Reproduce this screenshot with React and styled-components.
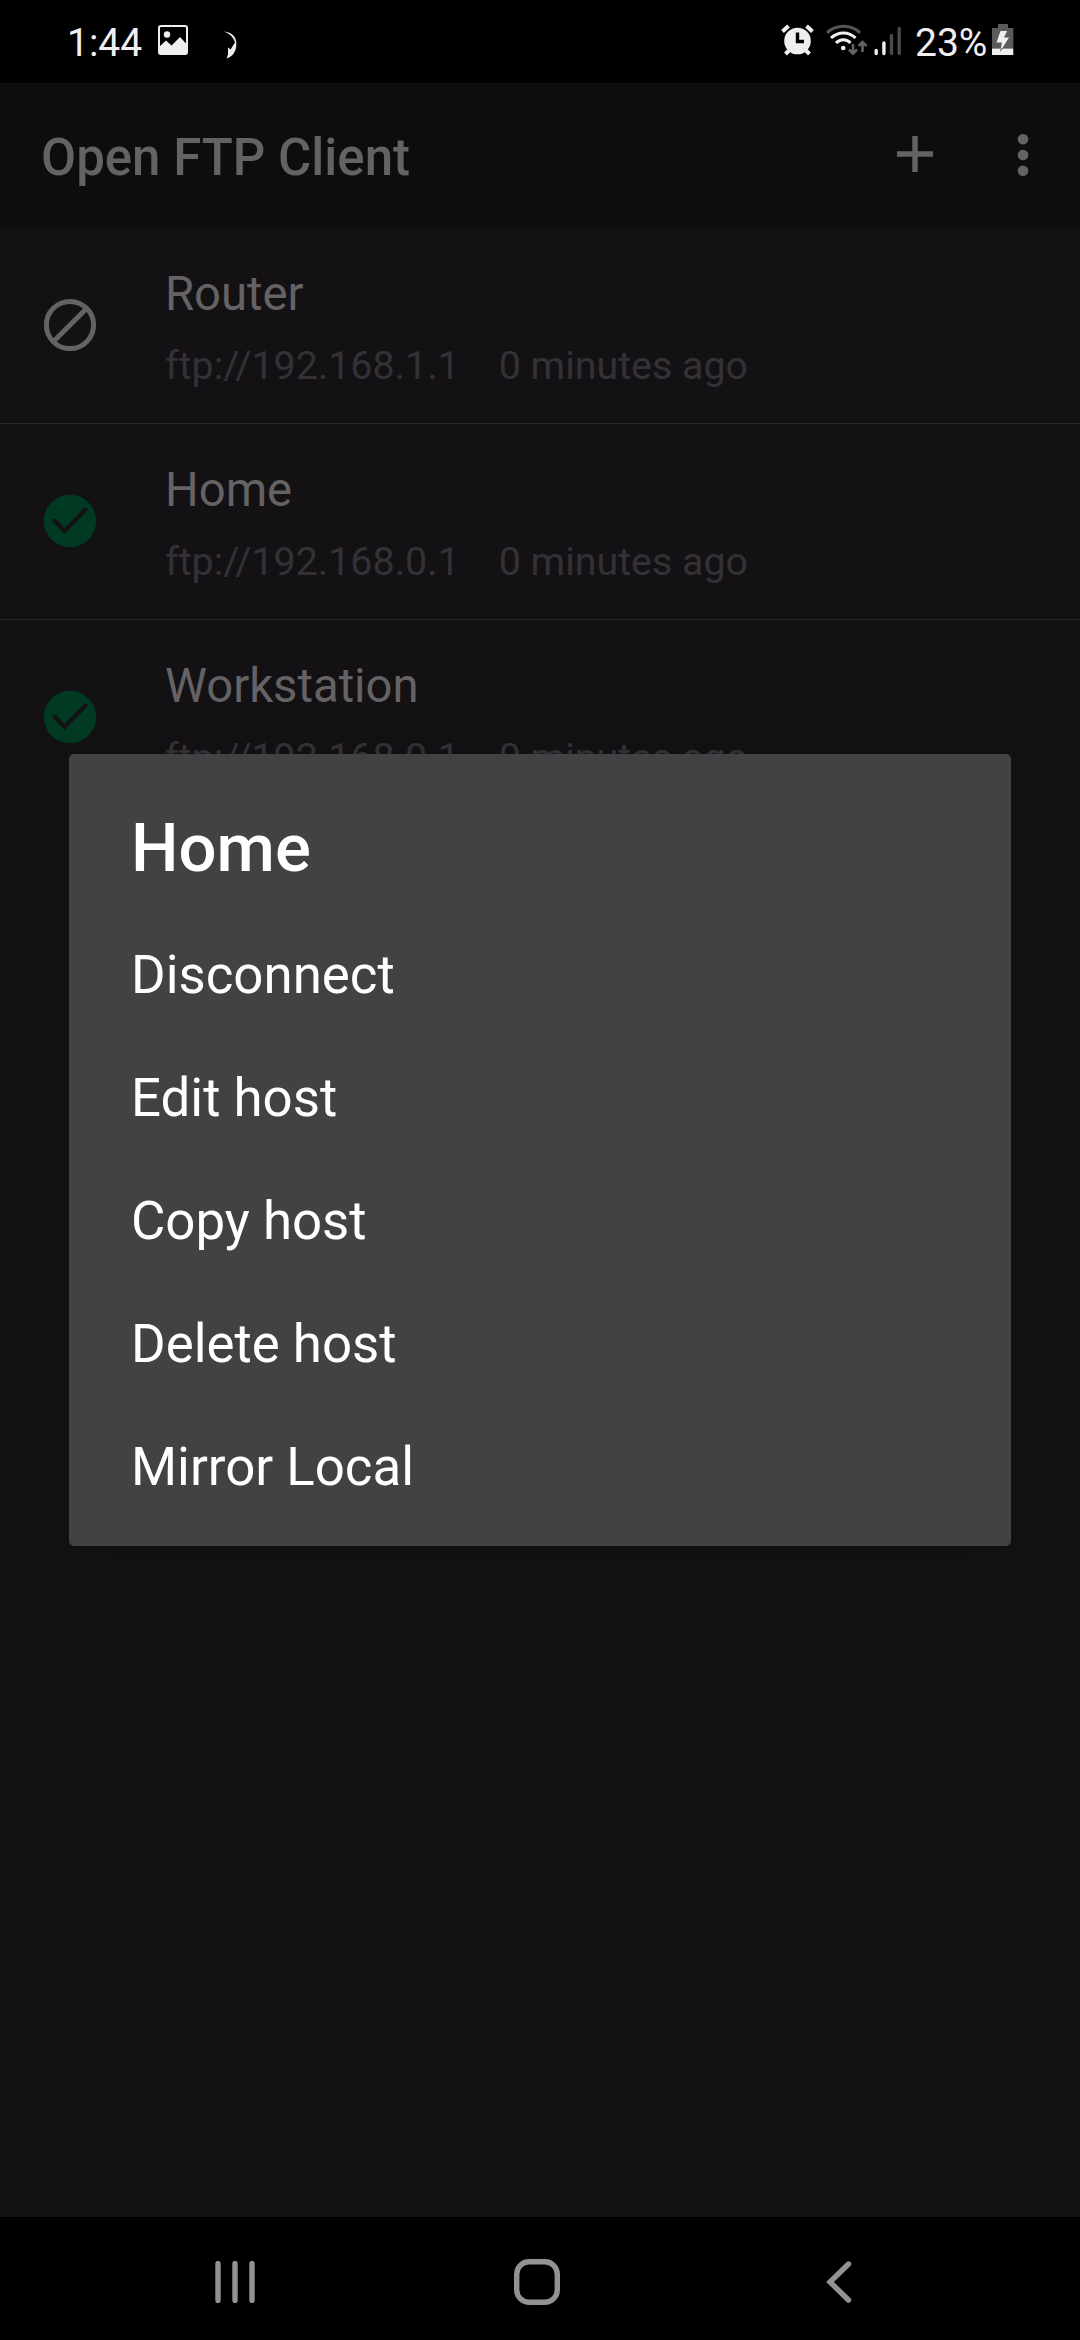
import styled, { createGlobalStyle } from "styled-components";

const hosts = [
    { name: "Router", url: "ftp://192.168.1.1", checked: "0 minutes ago", online: false },
    { name: "Home", url: "ftp://192.168.0.1", checked: "0 minutes ago", online: true },
    { name: "Workstation", url: "ftp://192.168.0.1", checked: "0 minutes ago", online: true },
];

const actions = ["Disconnect", "Edit host", "Copy host", "Delete host", "Mirror Local"];

const StatusBar = () => (
    <StatusDiv>
        <Clock>1:44</Clock>
        <PictureIcon />
        <MoonIcon />
        <StatusRight>
            <AlarmIcon />
            <WifiIcon />
            <SignalIcon />
            <Percent>23%</Percent>
            <BatteryIcon />
        </StatusRight>
    </StatusDiv>
);

const PictureIcon = () => (
    <svg width="30" height="30" viewBox="0 0 30 30">
        <rect x="1" y="1" width="28" height="28" rx="2" fill="none" stroke="#f0eef1" strokeWidth="2" />
        <circle cx="9" cy="9.5" r="3.2" fill="#f0eef1" />
        <path d="M1 22L8 15.5L13.5 20.5L22 12L29 19.5V29H1Z" fill="#f0eef1" />
    </svg>
);

const MoonIcon = () => (
    <Moon width="14" height="28" viewBox="0 0 14 28">
        <path d="M0 0.500C7 0.500 12.500 4.500 13.300 11V15C12.800 21 9 26 3.500 27.500L5 23.500V16.500L7.500 18.500L12 11.500C10 5.500 6 1.800 0 0.500Z" fill="#f0eef1" />
    </Moon>
);

const AlarmIcon = () => (
    <svg width="33" height="32" viewBox="0 0 33 32">
        <g fill="none" stroke="#f0eef1" strokeWidth="4">
            <path d="M1.500 7.500L7.500 2M25.500 2L31.500 7.500" />
            <path d="M4.500 30L9 25.500M24 25.500L28.500 30" />
        </g>
        <circle cx="16.500" cy="17" r="13.300" fill="#f0eef1" />
        <path d="M16.500 8.500V17.500H23" fill="none" stroke="#000" strokeWidth="3.400" />
    </svg>
);

const WifiIcon = () => (
    <Wifi width="42" height="32" viewBox="0 0 42 32">
        <g fill="none" strokeWidth="3">
            <path d="M1 8.800C10 .2 25 .2 34 8.800" stroke="#565457" />
            <path d="M5 14C12 7.200 23 7.200 29.500 14" stroke="#f0eef1" />
            <path d="M10 19C14.500 14.800 20.500 14.800 24.500 19" stroke="#f0eef1" />
        </g>
        <circle cx="17.200" cy="24" r="2.300" fill="#f0eef1" />
        <g fill="none" stroke="#666367" strokeWidth="2.600">
            <path d="M27 20V29.500M23 25.500L27 29.700L31 25.500" />
            <path d="M36.500 28V18.500M32.500 22L36.500 18L40.500 22" />
        </g>
    </Wifi>
);

const SignalIcon = () => (
    <Signal width="28" height="30" viewBox="0 0 28 30">
        <g strokeWidth="3.400" strokeLinecap="round">
            <path d="M2.200 24.500V27.500M9.900 17V27.500" stroke="#f0eef1" />
            <path d="M17.500 9.500V27.500M25.200 2.500V27.500" stroke="#4b494c" />
        </g>
    </Signal>
);

const BatteryIcon = () => (
    <Battery width="22" height="32" viewBox="0 0 22 32">
        <path d="M6 0H16V4H21.300V24.500H0V4H6Z" fill="#5c5a5d" />
        <path d="M0 24.500H21.300V31H0Z" fill="#f0eef1" />
        <path d="M8.500 7H15L12 13.500H17L8.200 27.500L10 18.500H4.500Z" fill="#f0eef1" />
        <path d="M9 24.500H10.500L8 28Z" fill="#222" />
    </Battery>
);

const OfflineIcon = () => (
    <svg width="54" height="54" viewBox="0 0 54 54" fill="none" stroke="#656266" strokeWidth="5">
        <circle cx="27" cy="27" r="23.600" />
        <path d="M10.500 43.500L43.500 10.500" />
    </svg>
);

const OnlineIcon = () => (
    <svg width="54" height="54" viewBox="0 0 54 54">
        <circle cx="27" cy="27" r="26.200" fill="#003a22" />
        <path d="M11.500 26.500L21.500 37L42.500 15.500" fill="none" stroke="#131114" strokeWidth="4" strokeLinecap="round" />
    </svg>
);

const App = () => {
    return (
        <Screen>
            <GlobalStyle />
            <StatusBar />
            <AppBar>
                <Title>Open FTP Client</Title>
                <svg width="36" height="36" viewBox="0 0 36 36">
                    <path d="M18 0V36M0 18H36" stroke="#656266" strokeWidth="5.400" />
                </svg>
                <MenuDots width="12" height="44" viewBox="0 0 12 44" fill="#656266">
                    <circle cx="6" cy="6.300" r="5.300" />
                    <circle cx="6" cy="22" r="5.300" />
                    <circle cx="6" cy="37.700" r="5.300" />
                </MenuDots>
            </AppBar>

            <HostList>
                {hosts.map((host) => (
                    <HostRow key={host.name}>
                        {host.online ? <OnlineIcon /> : <OfflineIcon />}
                        <HostText>
                            <HostName>{host.name}</HostName>
                            <HostInfo>
                                <span>{host.url}</span>
                                <span>{host.checked}</span>
                            </HostInfo>
                        </HostText>
                    </HostRow>
                ))}
            </HostList>

            <NavBar>
                <svg width="40" height="42" viewBox="0 0 40 42">
                    <path d="M3 2.500V39.500M20 2.500V39.500M37 2.500V39.500" stroke="#949195" strokeWidth="5.400" strokeLinecap="round" />
                </svg>
                <HomeButton width="46" height="46" viewBox="0 0 46 46">
                    <rect x="2.700" y="2.700" width="40.600" height="40.600" rx="12.500" fill="none" stroke="#949195" strokeWidth="5.400" />
                </HomeButton>
                <svg width="26" height="42" viewBox="0 0 26 42">
                    <path d="M22.500 3L4 21L22.500 39" fill="none" stroke="#949195" strokeWidth="5.400" strokeLinecap="round" />
                </svg>
            </NavBar>

            <Overlay>
                <Dialog role="dialog">
                    <DialogTitle>Home</DialogTitle>
                    {actions.map((action) => (
                        <Action key={action}>{action}</Action>
                    ))}
                </Dialog>
            </Overlay>
        </Screen>
    );
};

const GlobalStyle = createGlobalStyle`
    body {
        margin: 0;
        background-color: #131114;
        font-family: Roboto, sans-serif;
    }

    * {
        box-sizing: border-box;
    }

    svg {
        display: block;
        flex-shrink: 0;
    }
`

const Screen = styled.div`
    position: relative;
    display: flex;
    flex-direction: column;
    width: 1080px;
    height: 2340px;
    overflow: hidden;
    background-color: #131114;
`

const StatusDiv = styled.div`
    display: flex;
    align-items: center;
    height: 83px;
    padding: 0 66px 3px 67px;
    background-color: #000;
    color: #f0eef1;
`

const Clock = styled.span`
    width: 91px;
    padding-top: 5px;
    font-size: 39px;
    line-height: 46px;
`

const Moon = styled.svg`
    margin: 9px 0 0 35px;
`

const StatusRight = styled.div`
    display: flex;
    align-items: center;
    margin-left: auto;
`

const Wifi = styled.svg`
    margin-left: 12px;
`

const Signal = styled.svg`
    margin: 2px 0 0 6px;
`

const Percent = styled.span`
    width: 74px;
    margin-left: 13px;
    padding-top: 5px;
    font-size: 39px;
    line-height: 46px;
`

const Battery = styled.svg`
    margin-left: 3px;
`

const AppBar = styled.header`
    display: flex;
    align-items: center;
    height: 145px;
    padding: 0 51px 3px 41px;
    background-color: #0e0c0f;
`

const Title = styled.h1`
    flex: 1;
    margin: 0;
    padding-top: 7px;
    color: #656266;
    font-size: 51px;
    font-weight: 500;
    line-height: 62px;
`

const MenuDots = styled.svg`
    margin: 2px 0 0 84px;
`

const HostList = styled.main`
    flex: 1;
`

const HostRow = styled.div`
    display: flex;
    align-items: center;
    gap: 68px;
    height: 196px;
    padding: 0 0 2px 43px;
    border-bottom: 1px solid #272a2c;

    &:last-child {
        border-bottom-color: transparent;
    }
`

const HostText = styled.div`
    padding-top: 7px;
`

const HostName = styled.div`
    color: #656266;
    font-size: 47.250px;
    line-height: 60px;
`

const HostInfo = styled.div`
    display: flex;
    gap: 39px;
    margin-top: 15px;
    color: #333135;
    font-size: 39.400px;
    line-height: 54px;
`

const NavBar = styled.nav`
    display: flex;
    align-items: center;
    justify-content: space-between;
    height: 123px;
    padding: 7px 228px 0 215px;
    background-color: #000;
`

const HomeButton = styled.svg`
    margin-right: 8px;
`

// keeps the dialog centred between the status bar and the nav bar
const Overlay = styled.div`
    position: absolute;
    inset: 83px 0 123px;
    display: flex;
    align-items: center;
    justify-content: center;
`

const Dialog = styled.div`
    width: 942px;
    height: 792px;
    padding: 54px 62px 0;
    border-radius: 5px;
    background-color: #444144;
    box-shadow: 0 16px 50px rgba(0, 0, 0, 0.1);
    color: #fff;
`

const DialogTitle = styled.h2`
    margin: 0 0 25px;
    font-size: 67px;
    font-weight: 500;
    line-height: 80px;
`

const Action = styled.div`
    display: flex;
    align-items: center;
    height: 123px;
    font-size: 52.800px;
`

export default App;
